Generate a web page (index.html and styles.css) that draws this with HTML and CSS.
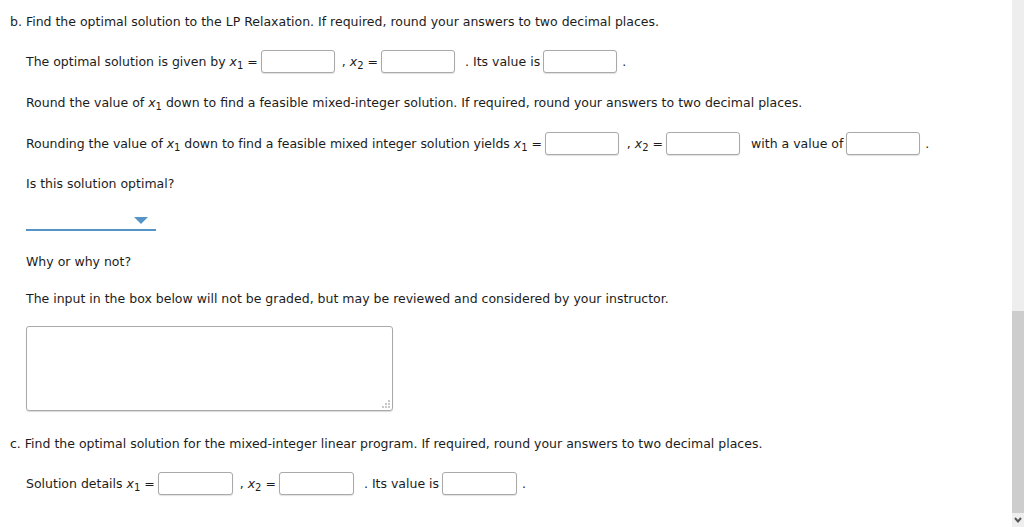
FILE: index.html
```html
<!DOCTYPE html>
<html>
<head>
<meta charset="utf-8">
<link rel="stylesheet" href="styles.css">
</head>
<body>
<div class="page">
  <main class="content">
    <p class="q q-b">b. Find the optimal solution to the LP Relaxation. If required, round your answers to two decimal places.</p>
    <div class="row row-1">
      <span>The optimal solution is given by <i class="var">x</i><sub>1</sub> =</span>
      <span class="box"></span>
      <span class="sep">, <i class="var">x</i><sub>2</sub> =</span>
      <span class="box"></span>
      <span class="sep value">. Its value is</span>
      <span class="box"></span>
      <span class="dot">.</span>
    </div>
    <p class="txt t-round">Round the value of <i class="var">x</i><sub>1</sub> down to find a feasible mixed-integer solution. If required, round your answers to two decimal places.</p>
    <div class="row row-2">
      <span class="lead-tight">Rounding the value of <i class="var">x</i><sub>1</sub> down to find a feasible mixed integer solution yields <i class="var">x</i><sub>1</sub> =</span>
      <span class="box"></span>
      <span class="sep sep-2">, <i class="var">x</i><sub>2</sub> =</span>
      <span class="box"></span>
      <span class="sep with">with a value of</span>
      <span class="box"></span>
      <span class="dot">.</span>
    </div>
    <p class="txt t-opt">Is this solution optimal?</p>
    <div class="dropdown"><span class="caret"></span></div>
    <p class="txt t-why">Why or why not?</p>
    <p class="txt t-note">The input in the box below will not be graded, but may be reviewed and considered by your instructor.</p>
    <div class="textarea"><span class="grip"></span></div>
    <p class="q q-c">c. Find the optimal solution for the mixed-integer linear program. If required, round your answers to two decimal places.</p>
    <div class="row row-3">
      <span>Solution details <i class="var">x</i><sub>1</sub> =</span>
      <span class="box"></span>
      <span class="sep">, <i class="var">x</i><sub>2</sub> =</span>
      <span class="box"></span>
      <span class="sep value">. Its value is</span>
      <span class="box"></span>
      <span class="dot">.</span>
    </div>
  </main>
  <aside class="scrollbar">
    <div class="track"></div>
    <div class="thumb"></div>
    <div class="arrow">
      <svg width="12" height="14" viewBox="0 0 12 14"><path d="M3 5 L6 8.5 L9 5" fill="none" stroke="#555" stroke-width="2"/></svg>
    </div>
  </aside>
</div>
</body>
</html>
```

FILE: styles.css
```css
html, body {
  margin: 0;
  padding: 0;
  background: #fff;
}
body {
  font-family: "DejaVu Sans", Verdana, sans-serif;
  font-size: 12.5px;
  color: #1c1c1c;
}
.page {
  display: flex;
  width: 1024px;
  height: 527px;
  overflow: hidden;
}
.content {
  flex: 1;
  display: flex;
  flex-direction: column;
  align-items: flex-start;
  padding-left: 10px;
}
p { margin: 0; line-height: 16px; }
.q-b { margin-top: 14px; }
.txt { margin-left: 16px; }
.row {
  display: flex;
  align-items: center;
  margin-left: 16px;
  height: 23px;
  white-space: nowrap;
}
.row-1 { margin-top: 20px; }
.t-round { margin-top: 22px; }
.row-2 { margin-top: 21px; }
.t-opt { margin-top: 21px; }
.dropdown {
  margin-left: 16px;
  margin-top: 17px;
  width: 130px;
  height: 20px;
  border-bottom: 2px solid #5594c9;
  display: flex;
  justify-content: flex-end;
  align-items: flex-start;
}
.caret {
  margin-top: 8px;
  margin-right: 8px;
  width: 0;
  height: 0;
  border-left: 7px solid transparent;
  border-right: 7px solid transparent;
  border-top: 7px solid #5594c9;
}
.t-why { margin-top: 23px; }
.t-note { margin-top: 21px; }
.textarea {
  margin-left: 16px;
  margin-top: 19px;
  width: 365px;
  height: 83px;
  border: 1px solid #a9a9a9;
  border-radius: 3px;
  box-shadow: 0 1px 1px rgba(0,0,0,0.15);
  display: flex;
  justify-content: flex-end;
  align-items: flex-end;
}
.grip {
  width: 8px;
  height: 8px;
  margin: 0 2px 2px 0;
  background:
    linear-gradient(#c8c8c8,#c8c8c8) 6px 0/2px 2px no-repeat,
    linear-gradient(#c8c8c8,#c8c8c8) 3px 3px/2px 2px no-repeat,
    linear-gradient(#c8c8c8,#c8c8c8) 6px 3px/2px 2px no-repeat,
    linear-gradient(#c8c8c8,#c8c8c8) 0 6px/2px 2px no-repeat,
    linear-gradient(#c8c8c8,#c8c8c8) 3px 6px/2px 2px no-repeat,
    linear-gradient(#c8c8c8,#c8c8c8) 6px 6px/2px 2px no-repeat;
}
.q-c { margin-top: 25px; }
.row-3 { margin-top: 20px; }
.var {
  font-family: "DejaVu Sans", Verdana, sans-serif;
  font-style: italic;
}
sub {
  font-size: 10px;
  vertical-align: -3px;
  line-height: 0;
}
.lead-tight { letter-spacing: -0.035px; }
.box {
  display: inline-block;
  width: 72px;
  height: 21px;
  border: 1px solid #a9a9a9;
  border-radius: 3px;
  box-shadow: 0 1px 1px rgba(0,0,0,0.12);
  margin-left: 3px;
  background: #fff;
}
.row-3 .box { width: 73px; }
.sep { margin-left: 7px; }
.sep.sep-2 { margin-left: 8px; }
.sep.value { margin-left: 10px; }
.sep.with { margin-left: 11px; }
.dot { margin-left: 5px; }
.scrollbar {
  width: 12px;
  height: 527px;
  display: flex;
  flex-direction: column;
  background: #eeeeee;
}
.track { height: 311px; }
.thumb { height: 202px; background: #cdcdcd; }
.arrow { height: 14px; display: flex; }
```
